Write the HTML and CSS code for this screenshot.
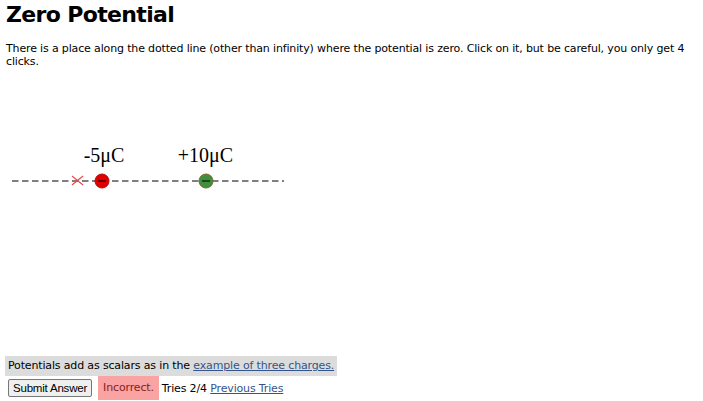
FILE: index.html
```html
<!DOCTYPE html>
<html>
<head>
<meta charset="utf-8">
<link rel="stylesheet" href="styles.css">
</head>
<body>
<h1 class="title">Zero Potential</h1>
<p class="intro">There is a place along the dotted line (other than infinity) where the potential is zero. Click on it, but be careful, you only get 4 clicks.</p>
<svg class="diagram" width="300" height="288" viewBox="0 0 300 288" xmlns="http://www.w3.org/2000/svg">
  <line x1="6" y1="113" x2="278" y2="113" stroke="#555" stroke-width="1.3" stroke-dasharray="6.5 3.5"/>
  <text x="98" y="94" text-anchor="middle" class="lbl">-5μC</text>
  <text x="199.5" y="94" text-anchor="middle" class="lbl">+10μC</text>
  <g stroke="#e84848" stroke-width="1.1">
    <line x1="66" y1="108" x2="77" y2="117"/>
    <line x1="77" y1="108" x2="66" y2="117"/>
  </g>
  <circle cx="96" cy="113" r="7" fill="#e00000" stroke="#b01010" stroke-width="1"/>
  <line x1="92" y1="113" x2="100" y2="113" stroke="#3a0000" stroke-width="1.4"/>
  <circle cx="200" cy="113" r="7" fill="#3f8f3f" stroke="#7a6a2a" stroke-width="1"/>
  <line x1="196" y1="113" x2="204" y2="113" stroke="#102a10" stroke-width="1.4"/>
</svg>
<div class="hint">Potentials add as scalars as in the <a href="#">example of three charges.</a></div>
<div class="actions">
  <button class="submit">Submit Answer</button>
  <span class="incorrect">Incorrect.</span>
  <span class="tries">Tries 2/4 <a href="#">Previous Tries</a></span>
</div>
</body>
</html>
```
FILE: styles.css
```css
html, body {
  margin: 0;
  padding: 0;
  background: #fff;
}
body {
  padding: 0 6px;
  font-family: "DejaVu Sans", Verdana, sans-serif;
  font-size: 11px;
  letter-spacing: -0.15px;
  color: #000;
}
.title {
  margin: 2px 0 0 0;
  font-size: 22px;
  letter-spacing: -0.65px;
  line-height: 26px;
  font-weight: bold;
}
.intro {
  margin: 14px 0 0 0;
  line-height: 13px;
}
.diagram {
  display: block;
}
.lbl {
  font-family: "Liberation Serif", "Times New Roman", serif;
  font-size: 20px;
  letter-spacing: 0;
  fill: #000;
}
a {
  color: #33558b;
  text-decoration: underline;
}
.hint {
  display: inline-block;
  margin-left: -1px;
  background: #dcdcdc;
  padding: 3px 3px;
  line-height: 14px;
}
.actions {
  display: flex;
  align-items: center;
  margin-top: 0;
  margin-left: 2px;
}
.submit {
  font-family: "Liberation Sans", Arial, sans-serif;
  font-size: 11.5px;
  letter-spacing: -0.2px;
  padding: 0 4px;
  height: 18px;
  line-height: 14px;
  background: #efefef;
  border: 1px solid #767676;
  border-radius: 2px;
  color: #000;
}
.incorrect {
  margin-left: 6px;
  background: #f9a3a3;
  color: #8a1c1c;
  padding: 0 5px;
  height: 24px;
  line-height: 24px;
}
.tries {
  margin-left: 3px;
}
```
